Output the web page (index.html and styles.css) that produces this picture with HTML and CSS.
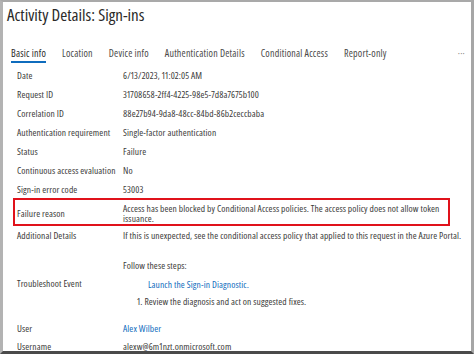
FILE: index.html
```html
<!DOCTYPE html>
<html lang="en">
<head>
  <meta charset="UTF-8">
  <title>Activity Details: Sign-ins</title>
  <link rel="stylesheet" href="styles.css">
</head>
<body>

  <div class="frame">
    <h1 class="title">Activity Details: Sign-ins</h1>

    <div class="tabs">
      <span class="tab active">Basic info</span>
      <span class="tab">Location</span>
      <span class="tab">Device info</span>
      <span class="tab">Authentication Details</span>
      <span class="tab">Conditional Access</span>
      <span class="tab">Report-only</span>
      <span class="tab more">&middot;&middot;&middot;</span>
    </div>

    <div class="details">
      <div class="row"><span class="label">Date</span><span class="value">6/13/2023, 11:02:05 AM</span></div>
      <div class="row"><span class="label">Request ID</span><span class="value">31708658-2ff4-4225-98e5-7d8a7675b100</span></div>
      <div class="row"><span class="label">Correlation ID</span><span class="value">88e27b94-9da8-48cc-84bd-86b2ceccbaba</span></div>
      <div class="row"><span class="label">Authentication requirement</span><span class="value">Single-factor authentication</span></div>
      <div class="row"><span class="label">Status</span><span class="value">Failure</span></div>
      <div class="row"><span class="label">Continuous access evaluation</span><span class="value">No</span></div>
      <div class="row"><span class="label">Sign-in error code</span><span class="value">53003</span></div>
      <div class="row highlight"><span class="label">Failure reason</span><span class="value">Access has been blocked by Conditional Access policies. The access policy does not allow token issuance.</span></div>
      <div class="row"><span class="label">Additional Details</span><span class="value nowrap">If this is unexpected, see the conditional access policy that applied to this request in the Azure Portal.</span></div>
      <div class="row troubleshoot">
        <span class="label">Troubleshoot Event</span>
        <div class="value steps">
          <span>Follow these steps:</span>
          <a class="link launch">Launch the Sign-in Diagnostic.</a>
          <span class="step">1. Review the diagnosis and act on suggested fixes.</span>
        </div>
      </div>
      <div class="row"><span class="label">User</span><a class="value link">Alex Wilber</a></div>
      <div class="row last"><span class="label">Username</span><span class="value">alexw@6m1nzt.onmicrosoft.com</span></div>
    </div>
  </div>

</body>
</html>
```

FILE: styles.css
```css
body {
  margin: 0;
  background: white;
  font-family: "Open Sans", "Noto Sans", sans-serif;
  color: #3b3a39;
}

.frame {
  box-sizing: border-box;
  width: 474px;
  height: 354px;
  border-top: 2px solid #a9a9a9;
  border-left: 3px solid #b3b3b3;
  border-right: 3px solid #a6a6a6;
  border-bottom: 3px solid #4a4a4a;
  overflow: hidden;
}

.title {
  margin: 1px 0 0 4px;
  font-size: 17px;
  font-weight: 500;
  font-stretch: 80%;
  color: #2b2a29;
  line-height: 24px;
}

.tabs {
  display: flex;
  gap: 16px;
  margin: 20px 0 0 8px;
  font-size: 10px;
  font-stretch: 84%;
  letter-spacing: 0.2px;
  line-height: 12px;
  color: #4a4948;
}

.tab {
  padding-bottom: 2px;
  border-bottom: 2px solid transparent;
  white-space: nowrap;
}

.tab.active {
  color: #2b2a29;
  border-bottom-color: #0f6cbd;
}

.tab.more {
  margin-left: auto;
  margin-right: 6px;
  color: #8a8886;
}

.details {
  margin-top: 3px;
  padding-left: 14px;
  font-size: 9.5px;
  font-stretch: 85%;
  font-variant-numeric: proportional-nums;
  letter-spacing: 0.1px;
  line-height: 10px;
}

.row {
  display: grid;
  grid-template-columns: 106px 330px;
  align-items: center;
  min-height: 19px;
}

.label,
.nowrap {
  white-space: nowrap;
}

.highlight {
  box-sizing: border-box;
  width: 437px;
  min-height: 0;
  margin: -1px 0 0 -4px;
  padding: 4px 0 0 2px;
  border: 2px solid #e0121b;
}

.highlight .value {
  max-width: 326px;
}

.troubleshoot {
  padding: 16px 0 12px;
}

.steps {
  display: flex;
  flex-direction: column;
}

.launch {
  margin: 9px 0 0 25px;
}

.step {
  margin: 7px 0 0 14px;
}

.row.last {
  min-height: 0;
  padding-top: 4px;
}

.link {
  color: #0f6cbd;
  text-decoration: none;
}
```
